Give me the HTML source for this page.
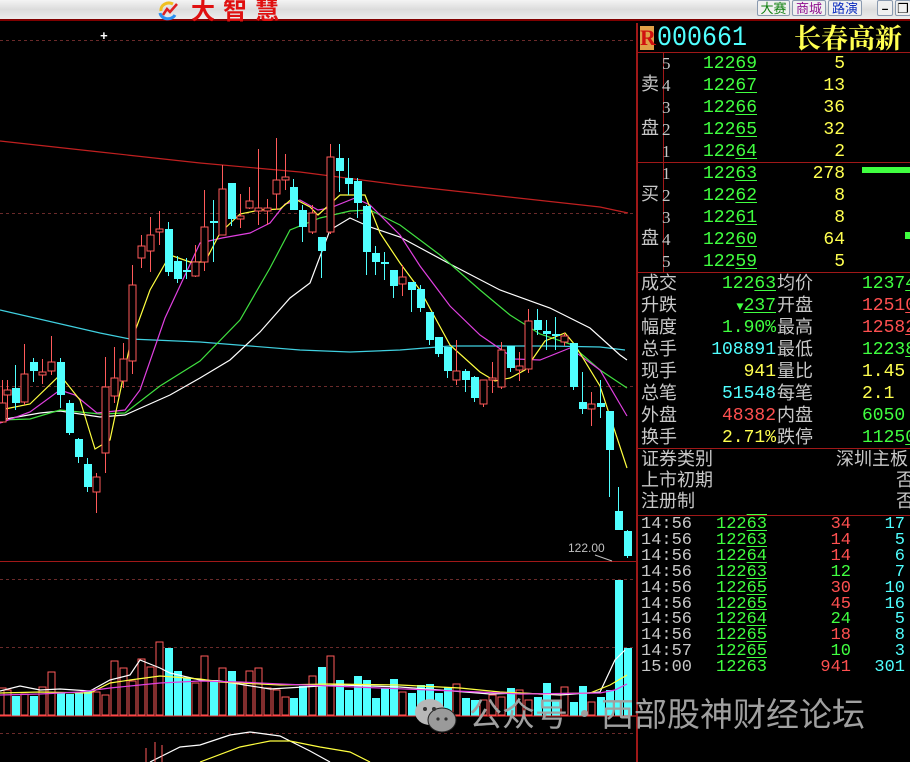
<!DOCTYPE html>
<html><head><meta charset="utf-8">
<style>
*{margin:0;padding:0;box-sizing:border-box}
body{width:910px;height:762px;overflow:hidden;background:#000;position:relative;font-family:"Liberation Mono","Noto Sans CJK SC",monospace}
#tb{position:absolute;left:0;top:0;width:910px;height:21px;background:linear-gradient(#f4f4f4,#dcdcdc 50%,#ececec);border-bottom:2px solid #800000}
.t{position:absolute;white-space:nowrap;line-height:1}
.cj{font-family:"Noto Sans CJK SC",sans-serif}
.g{color:#40ff40}.y{color:#ffff50}.c{color:#50ffff}.r{color:#ff5050}.w{color:#c8c8c8}
u{text-decoration:underline;text-underline-offset:2px}
.btn{position:absolute;top:0;height:16px;border:1px solid #8a9ab0;background:#f0f0f0;font-size:13px;line-height:14px;text-align:center;font-family:"Noto Sans CJK SC",sans-serif;border-radius:2px}
</style></head><body>
<div id="tb">
 <svg style="position:absolute;left:157px;top:1px" width="24" height="20"><path d="M3 12 A8 7 0 0 0 18 14" stroke="#2a8ef0" stroke-width="3" fill="none"/><path d="M4 10 A8 7 0 0 1 16 3" stroke="#f0c020" stroke-width="3" fill="none"/><path d="M6 14 L10 8 L13 11 L20 3" stroke="#e02020" stroke-width="2.5" fill="none"/></svg>
 <div class="t cj" style="left:191px;top:-3px;font-size:24px;font-weight:bold;color:#e01010;letter-spacing:8px">大智慧</div>
 <div class="btn" style="left:757px;width:33px;color:#108010">大赛</div>
 <div class="btn" style="left:792px;width:34px;color:#901090">商城</div>
 <div class="btn" style="left:828px;width:34px;color:#1030c0">路演</div>
 <div class="btn" style="left:877px;width:16px;font-weight:bold">–</div>
 <div class="btn" style="left:895px;width:16px">❐</div>
</div>
<svg id="ch" style="position:absolute;left:0;top:0" width="636" height="762"></svg>
<div class="t" style="left:568px;top:542px;font-size:12px;color:#c0c0c0;font-family:'Liberation Sans',sans-serif">122.00</div>
<div class="t w" style="left:100px;top:30px;font-size:13px;color:#fff;font-weight:bold">+</div>

<div style="position:absolute;left:636px;top:23px;width:2px;height:739px;background:#a01818"></div>
<div style="position:absolute;left:638px;top:52px;width:272px;height:1px;background:#a01818"></div>
<div style="position:absolute;left:638px;top:162px;width:272px;height:1px;background:#a01818"></div>
<div style="position:absolute;left:638px;top:272px;width:272px;height:1px;background:#a01818"></div>
<div style="position:absolute;left:638px;top:448px;width:272px;height:1px;background:#a01818"></div>
<div style="position:absolute;left:638px;top:515px;width:272px;height:1px;background:#a01818"></div>
<div style="position:absolute;left:663px;top:52px;width:1px;height:220px;background:#a01818"></div>
<div style="position:absolute;left:640px;top:26px;width:14px;height:24px;background:#e0a048"></div>
<div class="t" style="left:640px;top:27px;font-size:22px;color:#d01010;font-family:'Liberation Serif',serif;font-weight:bold">R</div>
<div class="t c" style="left:657px;top:24px;font-size:25px;transform:scaleY(1.1);transform-origin:top">000661</div>
<div class="t y" style="left:794px;top:23px;font-size:27px;font-weight:bold;font-family:'Noto Serif CJK SC',serif">长春高新</div>
<div id="ob"></div>
<div style="position:absolute;left:862px;top:167px;width:48px;height:6px;background:#40ff40"></div>
<div style="position:absolute;left:905px;top:232px;width:5px;height:7px;background:#40ff40"></div>
<div id="st"></div>
<div id="tk"></div>

<svg style="position:absolute;left:412px;top:696px" width="48" height="40"><ellipse cx="18" cy="16" rx="15" ry="13" fill="#b8b8b8"/><ellipse cx="30" cy="24" rx="14" ry="12" fill="#9a9a9a" stroke="#222" stroke-width="1"/><circle cx="13" cy="13" r="2" fill="#333"/><circle cx="22" cy="13" r="2" fill="#333"/><circle cx="26" cy="23" r="1.6" fill="#333"/><circle cx="34" cy="23" r="1.6" fill="#333"/></svg>
<div class="t cj" style="left:469px;top:696px;font-size:33px;color:#a0a0a0">公众号·西部股神财经论坛</div>

<script>
var C=[[2,'r',403,422,380,423],[7,'r',390,395,380,420],[15,'c',388,403,365,410],[24,'r',374,402,344,405],[33,'c',362,371,358,382],[42,'r',372,375,359,384],[51,'r',362,371,336,375],[60,'c',362,395,358,408],[69,'c',403,433,400,435],[78,'c',439,457,438,463],[87,'c',464,487,458,492],[96,'r',477,492,473,513],[105,'r',387,453,357,473],[114,'r',378,396,347,403],[123,'r',359,381,343,388],[132,'r',285,361,265,374],[141,'r',246,258,235,268],[150,'r',235,251,217,272],[159,'r',229,232,211,245],[168,'c',229,272,222,276],[177,'c',261,279,256,283],[186,'c',270,272,258,279],[195,'r',262,276,245,277],[204,'r',227,262,190,271],[213,'c',221,223,200,262],[222,'r',189,235,165,235],[231,'c',183,219,183,226],[240,'r',216,219,194,228],[249,'r',201,208,187,209],[258,'r',208,211,149,225],[267,'r',208,211,199,225],[276,'r',180,194,138,210],[285,'r',177,180,154,190],[293,'c',187,210,179,210],[302,'c',210,227,205,242],[312,'r',213,232,205,234],[321,'c',237,251,237,278],[330,'r',157,232,144,234],[339,'c',158,171,144,192],[348,'c',178,184,158,195],[357,'c',181,203,178,218],[366,'c',206,252,205,275],[375,'c',253,262,246,275],[384,'c',262,264,252,280],[393,'c',270,286,270,298],[402,'r',277,284,265,296],[411,'c',282,290,282,312],[420,'c',289,308,285,312],[429,'c',312,340,312,345],[438,'c',337,354,337,357],[447,'c',347,371,347,378],[456,'r',371,380,340,385],[465,'c',371,380,369,392],[474,'c',377,398,376,402],[483,'r',380,404,380,407],[492,'r',378,380,362,393],[501,'r',350,387,342,389],[510,'c',346,368,346,372],[519,'r',366,370,352,381],[528,'r',321,369,309,373],[537,'c',320,330,309,335],[546,'c',331,334,320,350],[555,'c',334,336,317,350],[564,'r',336,342,333,346],[573,'c',343,387,343,390],[582,'c',402,409,372,414],[591,'r',404,409,392,426],[600,'c',403,407,380,418],[609,'c',411,450,411,497],[618,'c',511,530,487,530],[627,'c',531,556,530,558]];
var V=[688,690,696,694,696,687,672,692,694,693,691,692,695,661,668,681,659,667,642,648,671,678,683,656,680,668,671,683,671,668,688,690,697,698,686,676,667,656,680,690,676,680,698,688,679,692,693,685,684,693,687,684,698,700,700,695,697,688,690,700,697,683,700,687,702,686,702,697,690,580,648];
var s='';
function L(y,col,dash){s+='<line x1="0" y1="'+y+'" x2="636" y2="'+y+'" stroke="'+col+'" stroke-width="1"'+(dash?' stroke-dasharray="3,3"':'')+'/>';}
L(40.5,'#6a2a2a',1);L(213.5,'#6a2a2a',1);L(386.5,'#6a2a2a',1);L(561.5,'#a01818');L(579.5,'#6a2a2a',1);L(647.5,'#6a2a2a',1);L(733.5,'#6a2a2a',1);
function P(pts,col){s+='<polyline fill="none" stroke="'+col+'" stroke-width="1.2" points="'+pts+'"/>';}
P('0,141 100,152 200,163 300,172 400,185 500,196 600,207 628,213','#c02020');
P('0,310 100,333 130,339 200,342 300,350 350,352 400,350 450,346 550,346 600,347 625,350','#40d0e0');
P('0,420 40,413 60,411 100,417 125,415 170,395 200,378 230,360 260,332 290,298 310,283 330,230 350,218 370,227 400,237 450,264 500,290 550,308 590,328 620,355 627,360','#ffffff');
P('0,420 30,419 60,410 100,414 125,413 160,386 200,361 240,320 270,268 290,230 320,218 350,211 370,210 400,225 440,255 480,290 510,315 540,334 570,344 600,370 627,388','#40e040');
P('0,423 30,412 60,390 75,395 97,413 125,410 140,390 165,318 200,243 222,238 250,233 270,223 285,204 300,200 318,210 330,208 355,198 370,205 400,235 420,266 450,306 480,335 515,359 540,360 570,348 600,370 627,416','#e040e0');
P('0,410 30,404 60,375 80,400 95,449 110,440 130,345 150,290 170,255 190,262 205,262 220,233 240,214 260,210 280,209 293,198 310,207 318,215 340,195 365,195 380,233 400,263 420,290 450,345 480,372 495,381 510,378 525,370 545,341 565,333 575,345 600,386 627,468','#ffff40');
for(var i=0;i<C.length;i++){var c=C[i],x=c[0],col=c[1]=='r'?'#ff5a5a':'#50ffff';
 s+='<line x1="'+(x+.5)+'" y1="'+c[4]+'" x2="'+(x+.5)+'" y2="'+c[5]+'" stroke="'+col+'"/>';
 var h=Math.max(1,c[3]-c[2]);
 if(c[1]=='r')s+='<rect x="'+(x-3)+'" y="'+c[2]+'" width="7" height="'+h+'" fill="#000" stroke="'+col+'"/>';
 else s+='<rect x="'+(x-3)+'" y="'+c[2]+'" width="8" height="'+h+'" fill="'+col+'"/>';
 var t=V[i]||695;
 if(c[1]=='r')s+='<rect x="'+(x-3)+'" y="'+t+'" width="7" height="'+(715-t)+'" fill="#000" stroke="#ff5a5a"/>';
 else s+='<rect x="'+(x-3)+'" y="'+t+'" width="8" height="'+(716-t)+'" fill="#50ffff"/>';
}
s+='<line x1="0" y1="716" x2="636" y2="716" stroke="#ff3030"/>';
P('0,691 20,686 40,690 60,689 90,691 110,680 130,675 140,660 160,668 170,673 200,680 220,681 270,689 320,686 340,685 400,687 440,690 490,694 520,693 560,695 600,692 615,660 625,650','#ffffff');
P('0,693 40,692 90,693 110,683 130,680 160,676 200,679 220,682 280,685 330,684 400,685 460,688 500,692 540,694 590,693 610,685 627,675','#ffff40');
P('0,695 40,694 80,692 110,688 130,686 160,683 200,681 240,682 280,684 330,686 380,688 430,690 480,692 520,694 600,693 615,690 627,684','#e040e0');
P('150,762 180,747 200,745 230,735 250,732 280,736 310,751 330,762','#ffffff');
P('200,762 240,747 270,741 290,741 320,747 350,752 370,762','#ffff40');
s+='<line x1="146" y1="748" x2="146" y2="762" stroke="#ff5a5a"/><line x1="155" y1="742" x2="155" y2="762" stroke="#ff5a5a"/><line x1="162" y1="745" x2="162" y2="762" stroke="#ff5a5a"/>';
s+='<line x1="595" y1="555" x2="612" y2="561" stroke="#c0c0c0"/>';
document.getElementById('ch').innerHTML=s;

var o='',sp=['12269','12267','12266','12265','12264'],sv=['5','13','36','32','2'],bp=['12263','12262','12261','12260','12259'],bv=['278','8','8','64','5'];
function row(y,lv,p,v){o+='<div class="t w" style="left:662px;top:'+y+'px;font-size:17px;font-family:\'Liberation Serif\',serif">'+lv+'</div>';
 o+='<div class="t g" style="left:703px;top:'+y+'px;font-size:18px">'+p.slice(0,3)+'<u>'+p.slice(3)+'</u></div>';
 o+='<div class="t y" style="right:65px;top:'+y+'px;font-size:18px">'+v+'</div>';}
for(var i=0;i<5;i++){row(55+22*i,5-i,sp[i],sv[i]);row(165+22*i,i+1,bp[i],bv[i]);}
o+='<div class="t w cj" style="left:641px;top:74px;font-size:18px">卖</div><div class="t w cj" style="left:641px;top:118px;font-size:18px">盘</div>';
o+='<div class="t w cj" style="left:641px;top:184px;font-size:18px">买</div><div class="t w cj" style="left:641px;top:228px;font-size:18px">盘</div>';
document.getElementById('ob').innerHTML=o;

var S=[['成交','g','122<u>63</u>','均价','g','1237<u>4</u>'],['升跌','g','<span style="font-size:12px">▼</span><u>237</u>','开盘','r','1251<u>0</u>'],['幅度','g','1.90%','最高','r','1258<u>2</u>'],['总手','c','108891','最低','g','1223<u>8</u>'],['现手','y','941','量比','y','1.45'],['总笔','c','51548','每笔','y','2.1'],['外盘','r','48382','内盘','g','6050'],['换手','y','2.71%','跌停','g','1125<u>0</u>']];
o='';
for(var i=0;i<8;i++){var y=273+22*i,r=S[i];
 o+='<div class="t w cj" style="left:641px;top:'+y+'px;font-size:18px">'+r[0]+'</div>';
 o+='<div class="t '+r[1]+'" style="right:134px;top:'+(y+2)+'px;font-size:18px">'+r[2]+'</div>';
 o+='<div class="t w cj" style="left:777px;top:'+y+'px;font-size:18px">'+r[3]+'</div>';
 o+='<div class="t '+r[4]+'" style="left:862px;top:'+(y+2)+'px;font-size:18px">'+r[5]+'</div>';}
o+='<div class="t w cj" style="left:641px;top:449px;font-size:18px">证券类别</div><div class="t w cj" style="left:836px;top:449px;font-size:18px">深圳主板</div>';
o+='<div class="t w cj" style="left:641px;top:470px;font-size:18px">上市初期</div><div class="t w cj" style="left:896px;top:470px;font-size:18px">否</div>';
o+='<div class="t w cj" style="left:641px;top:491px;font-size:18px">注册制</div><div class="t w cj" style="left:896px;top:491px;font-size:18px">否</div>';
document.getElementById('st').innerHTML=o;

var T=[['14:56','12263','r','34','17'],['14:56','12263','r','14','5'],['14:56','12264','r','14','6'],['14:56','12263','g','12','7'],['14:56','12265','r','30','10'],['14:56','12265','r','45','16'],['14:56','12264','g','24','5'],['14:56','12265','r','18','8'],['14:57','12265','g','10','3'],['15:00','12263','r','941','301']];
o='';
for(var i=0;i<10;i++){var y=516+15.9*i,r=T[i];
 o+='<div class="t w" style="left:641px;top:'+y+'px;font-size:17px">'+r[0]+'</div>';
 o+='<div class="t g" style="left:716px;top:'+y+'px;font-size:17px">122<span style="text-decoration:overline">'+r[1].slice(3)+'</span></div>';
 o+='<div class="t '+r[2]+'" style="right:59px;top:'+y+'px;font-size:17px">'+r[3]+'</div>';
 o+='<div class="t c" style="right:5px;top:'+y+'px;font-size:17px">'+r[4]+'</div>';}
document.getElementById('tk').innerHTML=o;
</script>
</body></html>
